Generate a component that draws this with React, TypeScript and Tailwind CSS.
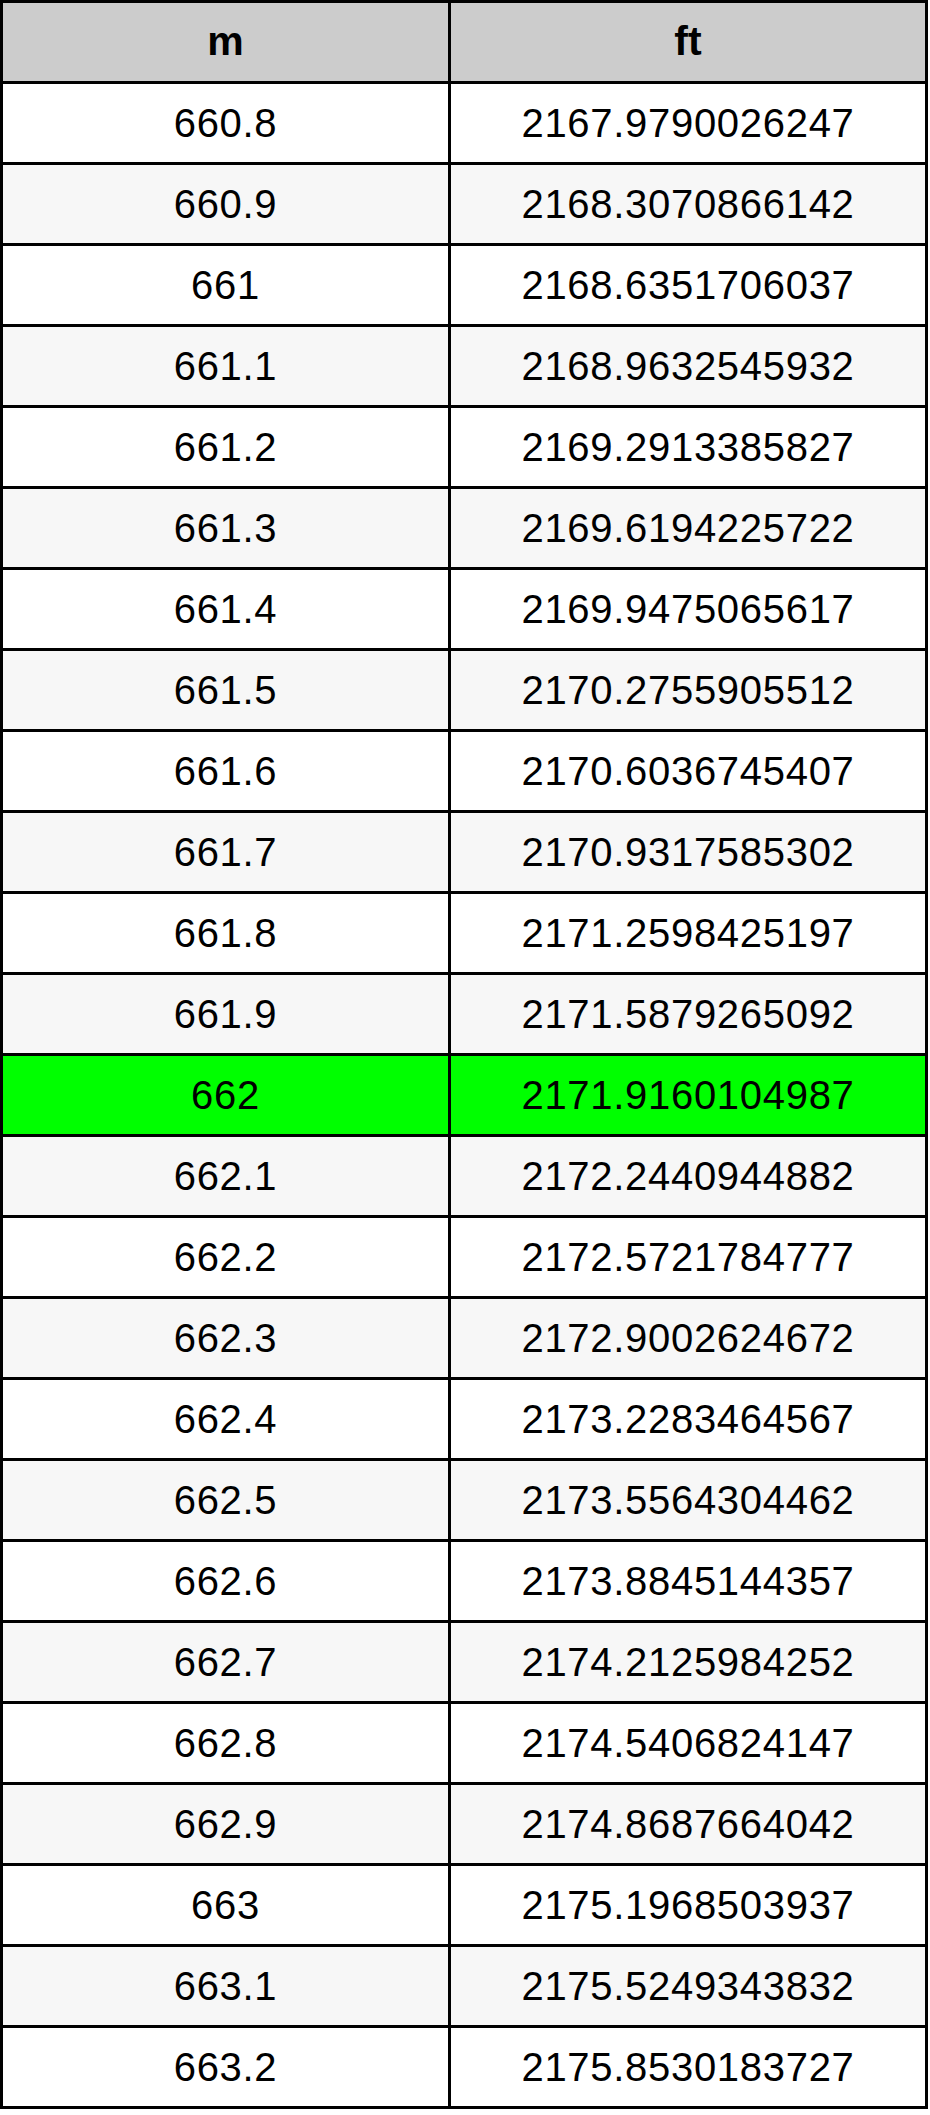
const rows: [string, string][] = [
  ["660.8", "2167.9790026247"],
  ["660.9", "2168.3070866142"],
  ["661", "2168.6351706037"],
  ["661.1", "2168.9632545932"],
  ["661.2", "2169.2913385827"],
  ["661.3", "2169.6194225722"],
  ["661.4", "2169.9475065617"],
  ["661.5", "2170.2755905512"],
  ["661.6", "2170.6036745407"],
  ["661.7", "2170.9317585302"],
  ["661.8", "2171.2598425197"],
  ["661.9", "2171.5879265092"],
  ["662", "2171.9160104987"],
  ["662.1", "2172.2440944882"],
  ["662.2", "2172.5721784777"],
  ["662.3", "2172.9002624672"],
  ["662.4", "2173.2283464567"],
  ["662.5", "2173.5564304462"],
  ["662.6", "2173.8845144357"],
  ["662.7", "2174.2125984252"],
  ["662.8", "2174.5406824147"],
  ["662.9", "2174.8687664042"],
  ["663", "2175.1968503937"],
  ["663.1", "2175.5249343832"],
  ["663.2", "2175.8530183727"],
];

export default function App() {
  return (
    <div className="bg-white min-h-[2115px] font-['Liberation_Sans',Arial,sans-serif] text-black">
      <div className="w-[928px] border-[3px] border-black">
        {/* header */}
        <div className="flex h-[78px] bg-[#cccccc] text-[41px] font-bold">
          <div className="w-[445px] flex items-center justify-center">m</div>
          <div className="flex-1 flex items-center justify-center border-l-[3px] border-black">ft</div>
        </div>

        {rows.map(([m, ft], i) => {
          const bg = m === "662" ? "bg-[#00ff00]" : i % 2 === 1 ? "bg-[#f7f7f7]" : "bg-white";
          return (
            <div key={m} className={`flex h-[81px] border-t-[3px] border-black text-[40px] tracking-[0.7px] ${bg}`}>
              <div className="w-[445px] flex items-center justify-center">{m}</div>
              <div className="flex-1 flex items-center justify-center border-l-[3px] border-black">{ft}</div>
            </div>
          );
        })}
      </div>
    </div>
  );
}
